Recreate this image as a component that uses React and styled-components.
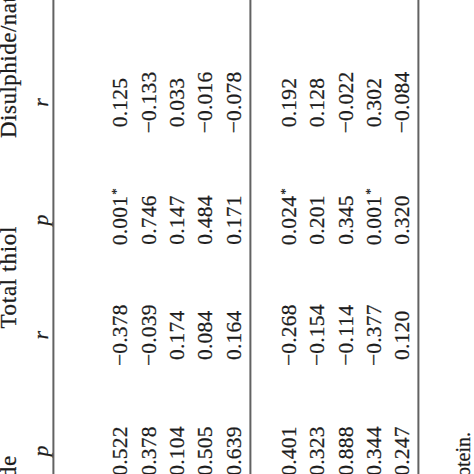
import React from "react";
import styled, { createGlobalStyle } from "styled-components";

const Global = createGlobalStyle`
  html, body { margin: 0; padding: 0; background: #ffffff; }
  body {
    font-family: "Liberation Serif", "Times New Roman", serif;
    color: #1c1c1c;
    -webkit-text-stroke: 0.25px #1c1c1c;
  }
`;

const COLS = "116px 117px 114.5px 116px 119px 118px";

const Viewport = styled.div`
  width: 474px;
  height: 474px;
  overflow: hidden;
  background: #fff;
`;

const Page = styled.div`
  width: 474px;
  height: 474px;
  transform: rotate(-90deg);
  transform-origin: 50% 50%;
`;

const Table = styled.div`
  display: flex;
  flex-direction: column;
  width: 700.5px;
  margin-left: -151.5px;
  transform: translateY(-4.6px);
`;

const Row = styled.div`
  display: grid;
  grid-template-columns: ${COLS};
  height: ${(p) => p.$h}px;
  line-height: ${(p) => p.$lh}px;
  font-size: ${(p) => p.$fs}px;
  letter-spacing: ${(p) => p.$ls || 0}px;
  font-style: ${(p) => (p.$italic ? "italic" : "normal")};
`;

const Cell = styled.div`
  grid-column: span ${(p) => p.$span || 1};
  text-align: center;
  white-space: nowrap;
`;

const LeadCell = styled(Cell)`
  text-align: left;
  padding-left: ${(p) => p.$indent}px;
  letter-spacing: 0.5px;
`;

const Rule = styled.div`
  height: 2px;
  background: #626262;
`;

const Group = styled.div`
  display: flex;
  flex-direction: column;
  padding-top: ${(p) => p.$top}px;
  padding-bottom: ${(p) => p.$bottom}px;
`;

const Star = styled.span`
  display: inline-block;
  width: 0;
  font-size: 13px;
  line-height: 0;
  vertical-align: 7px;
  padding-left: 1px;
`;

const Footnote = styled.div`
  display: flex;
  justify-content: flex-end;
  width: 193.5px;
  margin-top: 32.3px;
  font-size: 20px;
  line-height: 24px;
  white-space: nowrap;
`;

const groups = [
  {
    top: 52.2,
    bottom: 0.65,
    rows: [
      ["0.522", "−0.378", "0.001*", "0.125"],
      ["0.378", "−0.039", "0.746", "−0.133"],
      ["0.104", "0.174", "0.147", "0.033"],
      ["0.505", "0.084", "0.484", "−0.016"],
      ["0.639", "0.164", "0.171", "−0.078"],
    ],
  },
  {
    top: 24.3,
    bottom: 0,
    rows: [
      ["0.401", "−0.268", "0.024*", "0.192"],
      ["0.323", "−0.154", "0.201", "0.128"],
      ["0.888", "−0.114", "0.345", "−0.022"],
      ["0.344", "−0.377", "0.001*", "0.302"],
      ["0.247", "0.120", "0.320", "−0.084"],
    ],
  },
];

function Value({ v }) {
  if (v.endsWith("*")) {
    return (
      <>
        {v.slice(0, -1)}
        <Star>*</Star>
      </>
    );
  }
  return v;
}

export default function App() {
  return (
    <>
      <Global />
      <Viewport>
        <Page>
          <Table>
            <Row $h={31.5} $lh={28.33} $fs={23} $ls={0.7}>
              <Cell $span={2}>Disulphide</Cell>
              <Cell $span={2}>Total thiol</Cell>
              <LeadCell $span={2} $indent={24}>
                Disulphide/native thiol
              </LeadCell>
            </Row>
            <Row $h={25.6} $lh={28} $fs={22} $italic>
              <Cell>r</Cell>
              <Cell>p</Cell>
              <Cell>r</Cell>
              <Cell>p</Cell>
              <Cell>r</Cell>
              <Cell>p</Cell>
            </Row>
            <Rule />
            {groups.map((g, gi) => (
              <React.Fragment key={gi}>
                <Group $top={g.top} $bottom={g.bottom}>
                  {g.rows.map((r, ri) => (
                    <Row key={ri} $h={28.33} $lh={28.33} $fs={21.5} $ls={0.2}>
                      <Cell />
                      {r.map((v, ci) => (
                        <Cell key={ci}>
                          <Value v={v} />
                        </Cell>
                      ))}
                      <Cell />
                    </Row>
                  ))}
                </Group>
                <Rule />
              </React.Fragment>
            ))}
            <Footnote>*p &lt; 0.05. CRP: C-reactive protein.</Footnote>
          </Table>
        </Page>
      </Viewport>
    </>
  );
}
